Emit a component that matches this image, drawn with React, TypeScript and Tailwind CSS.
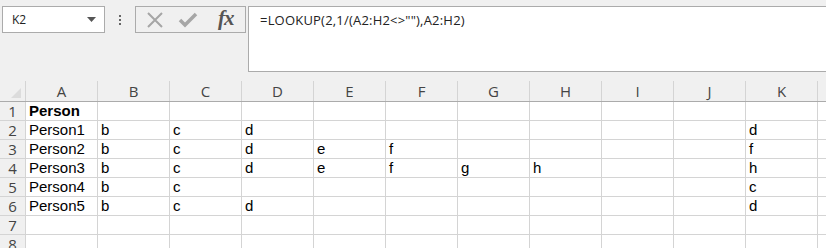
import React from 'react';

const cols = ['A', 'B', 'C', 'D', 'E', 'F', 'G', 'H', 'I', 'J', 'K', 'L'];

const rows: string[][] = [
  ['Person', '', '', '', '', '', '', '', '', '', '', ''],
  ['Person1', 'b', 'c', 'd', '', '', '', '', '', '', 'd', ''],
  ['Person2', 'b', 'c', 'd', 'e', 'f', '', '', '', '', 'f', ''],
  ['Person3', 'b', 'c', 'd', 'e', 'f', 'g', 'h', '', '', 'h', ''],
  ['Person4', 'b', 'c', '', '', '', '', '', '', '', 'c', ''],
  ['Person5', 'b', 'c', 'd', '', '', '', '', '', '', 'd', ''],
  ['', '', '', '', '', '', '', '', '', '', '', ''],
  ['', '', '', '', '', '', '', '', '', '', '', ''],
];

export default function App() {
  return (
    <div className="w-[826px] h-[248px] overflow-hidden bg-[#f0f0f0] font-['Liberation_Sans',Arial,sans-serif]">
      {/* formula bar */}
      <div className="h-[81px] flex items-start pt-[6px] pl-[2px]">
        <div className="w-[103px] h-[27px] bg-white border border-[#ababab] flex items-center pl-[9px] pr-[8px] font-['Open_Sans',sans-serif] text-[12px] text-[#222]">
          <span className="flex-1">K2</span>
          <svg width="9" height="5" viewBox="0 0 9 5">
            <path d="M0 0h9L4.5 5z" fill="#555" />
          </svg>
        </div>
        <div className="w-[30px] h-[27px] flex flex-col items-center justify-center gap-[2px]">
          <span className="w-[2px] h-[2px] bg-[#666]" />
          <span className="w-[2px] h-[2px] bg-[#666]" />
          <span className="w-[2px] h-[2px] bg-[#666]" />
        </div>
        <div className="w-[111px] h-[27px] border border-[#ababab] flex items-center">
          <svg width="20" height="20" viewBox="0 0 20 20" className="ml-[9px]">
            <path d="M3 3l14 14M17 3L3 17" stroke="#a6a6a6" strokeWidth="2" fill="none" />
          </svg>
          <svg width="20" height="20" viewBox="0 0 20 20" className="ml-[13px]">
            <path d="M2 10l5 5L18 4" stroke="#a6a6a6" strokeWidth="3.5" fill="none" />
          </svg>
          <span className="ml-[20px] font-['Liberation_Serif',serif] italic font-bold text-[21px] leading-none text-[#555] tracking-[-1px] -mt-[2px]">
            fx
          </span>
        </div>
        <div className="ml-[2px] flex-1 h-[66px] bg-white border border-[#ababab] border-r-0 pl-[11px] pt-[4px] font-['Open_Sans',sans-serif] text-[13px] tracking-[0.2px] text-[#222]">
          =LOOKUP(2,1/(A2:H2&lt;&gt;""),A2:H2)
        </div>
      </div>

      {/* column headers */}
      <div className="flex h-[21px] border-b border-[#ababab]">
        <div className="w-[26px] shrink-0 border-r border-[#d4d4d4] relative">
          <svg width="10" height="10" viewBox="0 0 10 10" className="absolute right-[4px] bottom-[3px]">
            <path d="M10 0V10H0z" fill="#dcdcdc" />
          </svg>
        </div>
        {cols.map((c) => (
          <div
            key={c}
            className="w-[72px] shrink-0 border-r border-[#d4d4d4] flex items-center justify-center font-['Open_Sans',sans-serif] text-[15px] text-[#444]"
          >
            {c}
          </div>
        ))}
      </div>

      {/* grid */}
      {rows.map((r, i) => (
        <div key={i} className="flex h-[19px]">
          <div className="w-[26px] shrink-0 border-r border-b border-[#d4d4d4] flex items-center justify-center font-['Open_Sans',sans-serif] text-[15px] text-[#444]">
            {i + 1}
          </div>
          {r.map((v, j) => (
            <div
              key={j}
              className={`w-[72px] shrink-0 bg-white border-r border-b border-[#d4d4d4] flex items-center pl-[3px] text-[15px] text-black whitespace-nowrap ${
                i === 0 && j === 0 ? 'font-bold' : ''
              }`}
            >
              {v}
            </div>
          ))}
        </div>
      ))}
    </div>
  );
}
